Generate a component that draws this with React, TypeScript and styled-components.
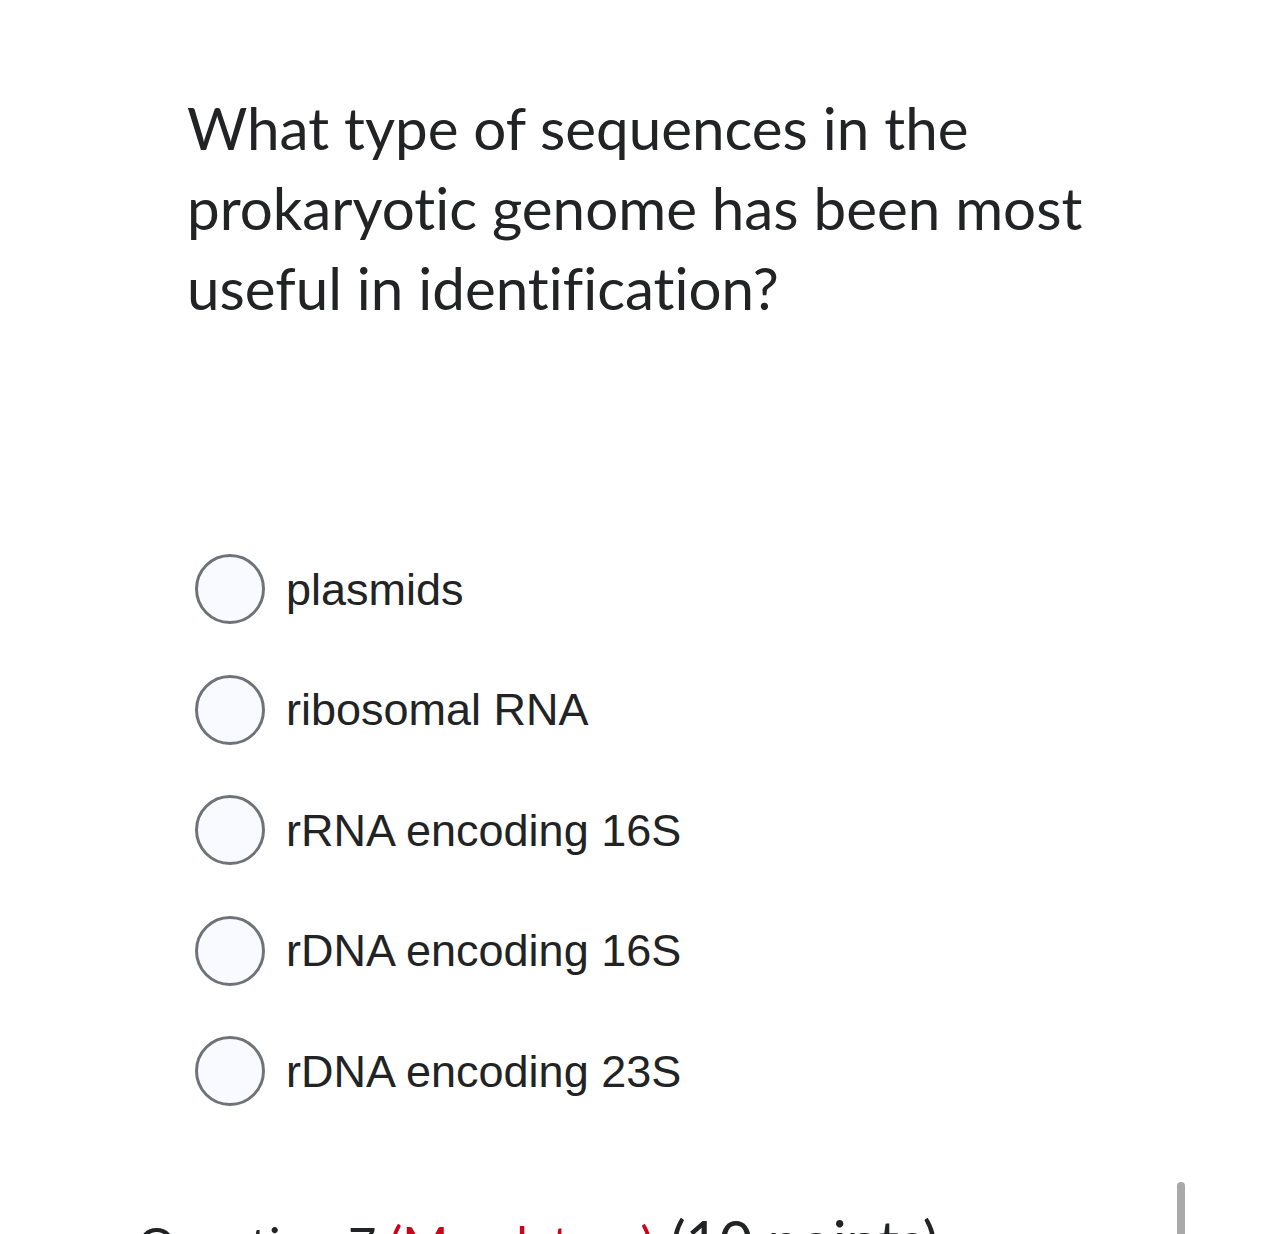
import React, { useState } from 'react'
import styled, { createGlobalStyle } from 'styled-components'

const GlobalStyle = createGlobalStyle`
  html, body {
    margin: 0;
    padding: 0;
    background: #ffffff;
    overflow: hidden;
  }
  body {
    font-family: Lato, 'Noto Sans', sans-serif;
    color: #222324;
  }
`

const Page = styled.div`
  position: relative;
  width: 1284px;
  height: 1234px;
  overflow: hidden;
  display: flex;
  flex-direction: column;
  box-sizing: border-box;
  padding-top: 87px;
`

const Question = styled.h2`
  margin: 0 0 0 187px;
  width: 960px;
  font-family: Lato, sans-serif;
  font-weight: 400;
  font-size: 58.3px;
  line-height: 80px;
  color: #222324;
  font-variant-ligatures: none;
`

const Options = styled.div`
  display: flex;
  flex-direction: column;
  gap: 50.5px;
  margin: 227px 0 0 195px;
`

const Option = styled.label`
  display: flex;
  align-items: center;
  gap: 21px;
  height: 70px;
  cursor: pointer;
`

const Radio = styled.span<{ $checked: boolean }>`
  width: 70px;
  height: 70px;
  box-sizing: border-box;
  border-radius: 50%;
  border: 3px solid #6f7378;
  background: #f8faff;
  display: flex;
  align-items: center;
  justify-content: center;
  flex-shrink: 0;

  &::after {
    content: '';
    width: 36px;
    height: 36px;
    border-radius: 50%;
    background: #2d3b45;
    display: ${(p) => (p.$checked ? 'block' : 'none')};
  }
`

const OptionText = styled.span`
  font-family: 'Liberation Sans', Arial, sans-serif;
  font-size: 45px;
  color: #222324;
  line-height: 1;
`

const NextHeading = styled.h2`
  margin: 104px 0 0 137px;
  font-family: Lato, sans-serif;
  font-weight: 400;
  font-size: 49px;
  line-height: 62px;
  white-space: nowrap;
  color: #222324;
`

const Mandatory = styled.span`
  color: #d0021b;
  font-size: 49.6px;
`

const Points = styled.span`
  font-size: 57.8px;
  margin-left: 4px;
`

const ScrollThumb = styled.div`
  position: absolute;
  left: 1177px;
  top: 1182px;
  width: 8px;
  height: 80px;
  border-radius: 4px;
  background: #a9a9a9;
`

const answers = [
  'plasmids',
  'ribosomal RNA',
  'rRNA encoding 16S',
  'rDNA encoding 16S',
  'rDNA encoding 23S'
]

function App() {
  const [selected, setSelected] = useState<string | null>(null)

  return (
    <Page>
      <GlobalStyle />
      <Question>
        What type of sequences in the prokaryotic genome has been most useful in
        identification?
      </Question>
      <Options>
        {answers.map((answer) => (
          <Option key={answer} onClick={() => setSelected(answer)}>
            <Radio $checked={selected === answer} />
            <OptionText>{answer}</OptionText>
          </Option>
        ))}
      </Options>
      <NextHeading>
        Question 7 <Mandatory>(Mandatory)</Mandatory> <Points>(10 points)</Points>
      </NextHeading>
      <ScrollThumb />
    </Page>
  )
}

export default App
